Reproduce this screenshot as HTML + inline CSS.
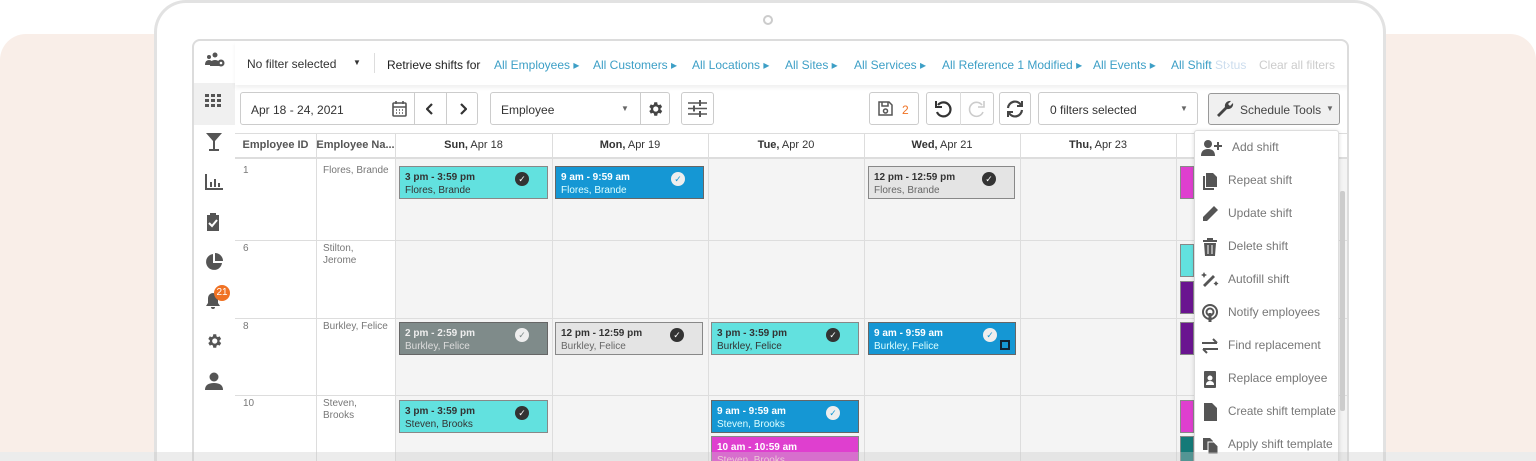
<!DOCTYPE html>
<html><head><meta charset="utf-8"><style>
*{box-sizing:border-box;margin:0;padding:0}
html,body{width:1536px;height:461px;overflow:hidden}
body{background:#fff;font-family:"Liberation Sans",Arial,sans-serif}
#wrap{position:relative;width:1536px;height:461px;overflow:hidden}
.a{position:absolute}
.bg{left:0;top:34px;width:1536px;height:418px;background:#f9eee8;border-radius:26px 26px 0 0}
.frame{left:154px;top:0;width:1232px;height:461px;background:#fff;border:3px solid #e2e2e2;border-bottom:0;border-radius:32px 32px 0 0}
.cam{left:763px;top:15px;width:10px;height:10px;border:2px solid #ccc;border-radius:50%}
.screen{left:192px;top:39px;width:1157px;height:422px;border:2px solid #dcdcdc;border-bottom:0;border-radius:8px 8px 0 0;background:#fff;overflow:hidden}
.t{font-size:12px;color:#333;white-space:nowrap}
.lnk{color:#3d9fc6;font-size:12px;white-space:nowrap}
.btn{border:1px solid #ccc;border-radius:3px;background:#fff}
.col{top:92px;height:340px;border-left:1px solid #ddd}
.hd{top:92px;height:25px;font-size:11px;color:#333;text-align:center;line-height:25px}
.sh{height:33px;border:1px solid #888;font-size:10px;padding:4px 5px;line-height:13px;overflow:hidden}
.sh b{font-size:10px;display:block}
.ck{position:absolute;right:18px;top:5px;width:14px;height:14px;border-radius:50%;font-size:9px;line-height:14px;text-align:center}
.mi{left:0;width:143px;height:33px;font-size:12px;color:#777;line-height:33px;padding-left:33px;white-space:nowrap;overflow:hidden}
.mi svg{position:absolute;left:6px;top:8px}
.sb{position:absolute;left:11px}
</style></head><body><div id="wrap">
<div class="a bg"></div>
<div class="a frame"></div>
<div class="a cam"></div>
<div class="a screen">
 <div class="a" style="left:0;top:42px;width:41px;height:42px;background:#f0f0f0"></div>
 <svg class="sb" style="top:11px" width="20" height="16" viewBox="0 0 20 16" fill="#555"><circle cx="4" cy="5" r="2"/><circle cx="10" cy="3" r="2.5"/><path d="M0 13q0-5 4-5t4 5zM5 14q0-6 5-6t5 6z"/><circle cx="16" cy="11" r="3.5"/><circle cx="16" cy="11" r="1.3" fill="#fff"/></svg>
 <svg class="sb" style="top:53px" width="16" height="14" viewBox="0 0 16 14" fill="#555"><rect x="0" y="0" width="4" height="3"/><rect x="6" y="0" width="4" height="3"/><rect x="12" y="0" width="4" height="3"/><rect x="0" y="5" width="4" height="3"/><rect x="6" y="5" width="4" height="3"/><rect x="12" y="5" width="4" height="3"/><rect x="0" y="10" width="4" height="3"/><rect x="6" y="10" width="4" height="3"/><rect x="12" y="10" width="4" height="3"/></svg>
 <svg class="sb" style="top:92px" width="18" height="18" viewBox="0 0 18 18" fill="#555"><path d="M1 0h16L10 8v8h4v2H4v-2h4V8z"/></svg>
 <svg class="sb" style="top:133px" width="18" height="16" viewBox="0 0 18 16" fill="#555"><path d="M0 0h2v14h16v2H0z"/><rect x="5" y="8" width="2" height="5"/><rect x="9" y="5" width="2" height="8"/><rect x="13" y="9" width="2" height="4"/></svg>
 <svg class="sb" style="top:172px" width="16" height="18" viewBox="0 0 16 18" fill="#555"><path d="M2 2h3V0h6v2h3v16H2z"/><path d="M4 10l3 3 5-6" stroke="#fff" stroke-width="2" fill="none"/></svg>
 <svg class="sb" style="top:212px" width="18" height="18" viewBox="0 0 18 18" fill="#555"><path d="M8 1A8 8 0 1 0 17 10H8z"/><path d="M10 0A8 8 0 0 1 18 8H10z"/></svg>
 <svg class="sb" style="top:251px" width="16" height="18" viewBox="0 0 16 18" fill="#555"><path d="M8 1a5 5 0 0 1 5 5v5l2 3H1l2-3V6a5 5 0 0 1 5-5zM6 15h4a2 2 0 0 1-4 0z"/></svg>
 <div class="a" style="left:20px;top:244px;width:16px;height:16px;border-radius:50%;background:#f07224;color:#fff;font-size:10px;text-align:center;line-height:16px">21</div>
 <svg class="sb" style="top:291px" width="18" height="18" viewBox="0 0 24 24" fill="#555"><path d="M19.4 13a7.5 7.5 0 0 0 0-2l2.1-1.6-2-3.5-2.5 1a7 7 0 0 0-1.7-1L15 3h-4l-.4 2.9a7 7 0 0 0-1.7 1l-2.5-1-2 3.5L6.5 11a7.5 7.5 0 0 0 0 2l-2.1 1.6 2 3.5 2.5-1a7 7 0 0 0 1.7 1L11 21h4l.4-2.9a7 7 0 0 0 1.7-1l2.5 1 2-3.5zM13 15.5a3.5 3.5 0 1 1 0-7 3.5 3.5 0 0 1 0 7z"/></svg>
 <svg class="sb" style="top:331px" width="18" height="18" viewBox="0 0 18 18" fill="#555"><circle cx="9" cy="5" r="4.5"/><path d="M0 18q0-7 9-7t9 7z"/></svg>
 <div class="a" style="left:41px;top:0;width:1114px;height:44px;box-shadow:0 3px 4px rgba(0,0,0,.06)"></div>
 <div class="a t" style="left:53px;top:16px">No filter selected</div>
 <div class="a t" style="left:159px;top:17px;font-size:8px">▼</div>
 <div class="a" style="left:180px;top:12px;height:20px;border-left:1px solid #ddd"></div>
 <div class="a t" style="left:193px;top:17px;color:#222">Retrieve shifts for</div>
 <div class="a lnk" style="left:300px;top:17px">All Employees ▸</div>
 <div class="a lnk" style="left:399px;top:17px">All Customers ▸</div>
 <div class="a lnk" style="left:498px;top:17px">All Locations ▸</div>
 <div class="a lnk" style="left:591px;top:17px">All Sites ▸</div>
 <div class="a lnk" style="left:660px;top:17px">All Services ▸</div>
 <div class="a lnk" style="left:748px;top:17px">All Reference 1 Modified ▸</div>
 <div class="a lnk" style="left:899px;top:17px">All Events ▸</div>
 <div class="a lnk" style="left:977px;top:17px">All Shift <span style="color:#cde">St›tus</span></div>
 <div class="a t" style="left:1065px;top:17px;color:#ccc">Clear all filters</div>
 <div class="a btn" style="left:46px;top:51px;width:238px;height:33px"></div>
 <div class="a t" style="left:57px;top:62px">Apr 18 - 24, 2021</div>
 <svg class="a" style="left:198px;top:60px" width="15" height="16" viewBox="0 0 15 16" fill="none" stroke="#555" stroke-width="1.6"><rect x="1" y="2" width="13" height="13" rx="1"/><path d="M1 6h13M4 0v3M11 0v3"/><path d="M4 9h1M7 9h1M10 9h1M4 12h1M7 12h1M10 12h1" stroke-width="1.4"/></svg>
 <div class="a" style="left:220px;top:51px;height:33px;border-left:1px solid #ccc"></div>
 <div class="a" style="left:252px;top:51px;height:33px;border-left:1px solid #ccc"></div>
 <svg class="a" style="left:232px;top:62px" width="8" height="12" viewBox="0 0 8 12" fill="none" stroke="#333" stroke-width="2.2"><path d="M6 1L1 6l5 5"/></svg>
 <svg class="a" style="left:265px;top:62px" width="8" height="12" viewBox="0 0 8 12" fill="none" stroke="#333" stroke-width="2.2"><path d="M2 1l5 5-5 5"/></svg>
 <div class="a btn" style="left:296px;top:51px;width:180px;height:33px"></div>
 <div class="a t" style="left:307px;top:62px">Employee</div>
 <div class="a t" style="left:427px;top:63px;font-size:8px;color:#666">▼</div>
 <div class="a" style="left:446px;top:51px;height:33px;border-left:1px solid #ccc"></div>
 <svg class="a" style="left:452px;top:59px" width="18" height="18" viewBox="0 0 24 24" fill="#444"><path d="M19.4 13a7.5 7.5 0 0 0 0-2l2.1-1.6-2-3.5-2.5 1a7 7 0 0 0-1.7-1L15 3h-4l-.4 2.9a7 7 0 0 0-1.7 1l-2.5-1-2 3.5L6.5 11a7.5 7.5 0 0 0 0 2l-2.1 1.6 2 3.5 2.5-1a7 7 0 0 0 1.7 1L11 21h4l.4-2.9a7 7 0 0 0 1.7-1l2.5 1 2-3.5zM13 15.5a3.5 3.5 0 1 1 0-7 3.5 3.5 0 0 1 0 7z"/></svg>
 <div class="a btn" style="left:487px;top:51px;width:33px;height:33px"></div>
 <svg class="a" style="left:494px;top:59px" width="19" height="17" viewBox="0 0 19 17" stroke="#555" stroke-width="1.6" fill="none"><path d="M0 3h19M0 8.5h19M0 14h19"/><path d="M12 0v6M6 5.5v6M12 11v6" stroke-width="2"/></svg>
 <div class="a btn" style="left:675px;top:51px;width:50px;height:33px"></div>
 <svg class="a" style="left:684px;top:60px" width="15" height="15" viewBox="0 0 15 15" fill="none" stroke="#555" stroke-width="1.5"><path d="M1 1h10l3 3v10H1z"/><path d="M4 1v4h6V1"/><circle cx="7.5" cy="10" r="2"/></svg>
 <div class="a t" style="left:708px;top:62px;color:#f07224">2</div>
 <div class="a btn" style="left:732px;top:51px;width:68px;height:33px"></div>
 <div class="a" style="left:766px;top:51px;height:33px;border-left:1px solid #ddd"></div>
 <svg class="a" style="left:740px;top:59px" width="18" height="18" viewBox="0 0 18 18" fill="none" stroke="#333" stroke-width="2.2"><path d="M4 5a7 7 0 1 1-1 7"/><path d="M2 1v6h6" stroke-width="2"/></svg>
 <svg class="a" style="left:774px;top:59px" width="18" height="18" viewBox="0 0 18 18" fill="none" stroke="#ccc" stroke-width="1.6"><path d="M14 5a7 7 0 1 0 1 7"/><path d="M16 1v6h-6"/></svg>
 <div class="a btn" style="left:805px;top:51px;width:32px;height:33px"></div>
 <svg class="a" style="left:812px;top:59px" width="18" height="18" viewBox="0 0 18 18" fill="none" stroke="#444" stroke-width="2.2"><path d="M2 8a7 7 0 0 1 13-3M16 10a7 7 0 0 1-13 3"/><path d="M16 1v5h-5M2 17v-5h5" stroke-width="2"/></svg>
 <div class="a btn" style="left:844px;top:51px;width:160px;height:33px"></div>
 <div class="a t" style="left:856px;top:62px">0 filters selected</div>
 <div class="a t" style="left:986px;top:63px;font-size:8px;color:#666">▼</div>
 <div class="a" style="left:1014px;top:52px;width:132px;height:32px;border:1px solid #999;border-radius:3px;background:#f0f0f0"></div>
 <svg class="a" style="left:1022px;top:59px" width="18" height="18" viewBox="0 0 18 18" fill="#444"><path d="M17 3l-3 3-2-2 3-3a5 5 0 0 0-6 6L1 15l2 2 8-8a5 5 0 0 0 6-6z"/></svg>
 <div class="a t" style="left:1046px;top:62px;color:#444">Schedule Tools</div>
 <div class="a t" style="left:1132px;top:63px;font-size:8px;color:#666">▼</div>
 <div class="a" style="left:41px;top:92px;width:1116px;height:340px;background:#f4f4f4"></div>
 <div class="a" style="left:41px;top:92px;width:161px;height:340px;background:#fff"></div>
 <div class="a" style="left:41px;top:92px;width:1116px;height:26px;background:#fff;border-top:1px solid #ddd;border-bottom:2px solid #ddd"></div>
 <div class="a" style="left:41px;top:199px;width:1116px;border-top:1px solid #ddd"></div>
 <div class="a" style="left:41px;top:277px;width:1116px;border-top:1px solid #ddd"></div>
 <div class="a" style="left:41px;top:354px;width:1116px;border-top:1px solid #ddd"></div>
 <div class="a col" style="left:122px"></div><div class="a col" style="left:201px"></div>
 <div class="a col" style="left:358px"></div><div class="a col" style="left:514px"></div>
 <div class="a col" style="left:670px"></div><div class="a col" style="left:826px"></div>
 <div class="a col" style="left:982px"></div>
 <div class="a hd" style="left:41px;width:81px;font-weight:bold;color:#555">Employee ID</div>
 <div class="a hd" style="left:122px;width:79px;font-weight:bold;color:#555">Employee Na...</div>
 <div class="a hd" style="left:201px;width:157px"><b>Sun,</b> Apr 18</div>
 <div class="a hd" style="left:358px;width:156px"><b>Mon,</b> Apr 19</div>
 <div class="a hd" style="left:514px;width:156px"><b>Tue,</b> Apr 20</div>
 <div class="a hd" style="left:670px;width:156px"><b>Wed,</b> Apr 21</div>
 <div class="a hd" style="left:826px;width:156px"><b>Thu,</b> Apr 23</div>
 <div class="a t" style="left:49px;top:124px;font-size:10px;color:#777">1</div>
 <div class="a t" style="left:129px;top:124px;font-size:10px;color:#777">Flores, Brande</div>
 <div class="a t" style="left:49px;top:202px;font-size:10px;color:#777">6</div>
 <div class="a t" style="left:129px;top:202px;font-size:10px;color:#777;line-height:12px">Stilton,<br>Jerome</div>
 <div class="a t" style="left:49px;top:280px;font-size:10px;color:#777">8</div>
 <div class="a t" style="left:129px;top:280px;font-size:10px;color:#777">Burkley, Felice</div>
 <div class="a t" style="left:49px;top:357px;font-size:10px;color:#777">10</div>
 <div class="a t" style="left:129px;top:357px;font-size:10px;color:#777;line-height:12px">Steven,<br>Brooks</div>
 <div class="a sh" style="left:205px;top:125px;width:149px;background:#62e1df;color:#333"><b>3 pm - 3:59 pm</b>Flores, Brande<span class="ck" style="background:#333;color:#fff">✓</span></div>
 <div class="a sh" style="left:361px;top:125px;width:149px;background:#1597d4;color:#dff;border-color:#666"><b style="color:#fff">9 am - 9:59 am</b>Flores, Brande<span class="ck" style="background:#eee;color:#1597d4">✓</span></div>
 <div class="a sh" style="left:674px;top:125px;width:147px;background:#e4e4e4;color:#333"><b>12 pm - 12:59 pm</b><span style="color:#666">Flores, Brande</span><span class="ck" style="background:#333;color:#fff">✓</span></div>
 <div class="a sh" style="left:205px;top:281px;width:149px;background:#7f8b8a;color:#ddd;border-color:#666"><b style="color:#eee">2 pm - 2:59 pm</b>Burkley, Felice<span class="ck" style="background:#eee;color:#7f8b8a">✓</span></div>
 <div class="a sh" style="left:361px;top:281px;width:148px;background:#e4e4e4;color:#333"><b>12 pm - 12:59 pm</b><span style="color:#666">Burkley, Felice</span><span class="ck" style="background:#333;color:#fff">✓</span></div>
 <div class="a sh" style="left:517px;top:281px;width:148px;background:#62e1df;color:#333"><b>3 pm - 3:59 pm</b>Burkley, Felice<span class="ck" style="background:#333;color:#fff">✓</span></div>
 <div class="a sh" style="left:674px;top:281px;width:148px;background:#1597d4;color:#dff;border-color:#666"><b style="color:#fff">9 am - 9:59 am</b>Burkley, Felice<span class="ck" style="background:#eee;color:#1597d4">✓</span><span class="a" style="right:5px;top:17px;width:10px;height:10px;border:2px solid #123;background:#1597d4"></span></div>
 <div class="a sh" style="left:205px;top:359px;width:149px;background:#62e1df;color:#333"><b>3 pm - 3:59 pm</b>Steven, Brooks<span class="ck" style="background:#333;color:#fff">✓</span></div>
 <div class="a sh" style="left:517px;top:359px;width:148px;background:#1597d4;color:#dff;border-color:#666"><b style="color:#fff">9 am - 9:59 am</b>Steven, Brooks<span class="ck" style="background:#eee;color:#1597d4">✓</span></div>
 <div class="a sh" style="left:517px;top:395px;width:148px;height:27px;background:#df3fcf;color:#fcd;border-color:#888;border-bottom:0"><b style="color:#fff">10 am - 10:59 am</b>Steven, Brooks</div>
 <div class="a" style="left:986px;top:125px;width:14px;height:33px;background:#df3fcf;border:1px solid #888"></div>
 <div class="a" style="left:986px;top:203px;width:14px;height:33px;background:#62e1df;border:1px solid #888"></div>
 <div class="a" style="left:986px;top:240px;width:14px;height:33px;background:#6a1590;border:1px solid #888"></div>
 <div class="a" style="left:986px;top:281px;width:14px;height:33px;background:#6a1590;border:1px solid #888"></div>
 <div class="a" style="left:986px;top:359px;width:14px;height:33px;background:#df3fcf;border:1px solid #888"></div>
 <div class="a" style="left:986px;top:395px;width:14px;height:27px;background:#157a78;border:1px solid #888;border-bottom:0"></div>
 <div class="a" style="left:1000px;top:89px;width:145px;height:333px;background:#fff;border:1px solid #ddd;border-bottom:0;border-radius:3px 3px 0 0;box-shadow:0 1px 4px rgba(0,0,0,.15);overflow:hidden">
  <div class="a mi" style="top:0;padding-left:37px">Add shift<svg width="22" height="18" viewBox="0 0 22 18" fill="#555"><circle cx="7" cy="5" r="4"/><path d="M0 17q0-7 7-7t7 7z"/><path d="M17 3v8M13 7h8" stroke="#555" stroke-width="2"/></svg></div>
  <div class="a mi" style="top:33px">Repeat shift<svg width="18" height="18" viewBox="0 0 18 18" fill="#555"><path d="M5 1h7l4 4v10H5z"/><path d="M2 4h2v12h9v2H2z"/></svg></div>
  <div class="a mi" style="top:66px">Update shift<svg width="18" height="18" viewBox="0 0 18 18" fill="#555"><path d="M13 1l4 4L6 16H2v-4z"/></svg></div>
  <div class="a mi" style="top:99px">Delete shift<svg width="18" height="18" viewBox="0 0 18 18" fill="#555"><path d="M2 2h14v2H2zM6 0h6v2H6zM3 5h12l-1 13H4z"/><path d="M7 7v9M11 7v9" stroke="#fff"/></svg></div>
  <div class="a mi" style="top:132px">Autofill shift<svg width="18" height="18" viewBox="0 0 18 18" fill="#555"><path d="M12 4l2 2L4 16l-2-2z"/><path d="M3 1l1 2 2 1-2 1-1 2-1-2-2-1 2-1zM15 10l1 1.5 1.5 1-1.5 1-1 1.5-1-1.5-1.5-1 1.5-1z"/></svg></div>
  <div class="a mi" style="top:165px">Notify employees<svg width="18" height="18" viewBox="0 0 18 18" fill="none" stroke="#555" stroke-width="2"><circle cx="9" cy="8" r="7"/><circle cx="9" cy="8" r="3.5"/><path d="M9 9v9" stroke-width="3"/></svg></div>
  <div class="a mi" style="top:198px">Find replacement<svg width="18" height="18" viewBox="0 0 18 18" fill="none" stroke="#555" stroke-width="2"><path d="M1 6h15M12 2l4 4M17 12H2M6 16l-4-4"/></svg></div>
  <div class="a mi" style="top:231px">Replace employee<svg width="18" height="18" viewBox="0 0 18 18" fill="#555"><rect x="3" y="1" width="12" height="17" rx="1"/><circle cx="9" cy="8" r="2.5" fill="#fff"/><path d="M5 15q0-4 4-4t4 4z" fill="#fff"/></svg></div>
  <div class="a mi" style="top:264px;font-size:11.7px">Create shift template<svg width="18" height="18" viewBox="0 0 18 18" fill="#555"><path d="M3 0h8l5 5v13H3z"/></svg></div>
  <div class="a mi" style="top:297px">Apply shift template<svg width="18" height="18" viewBox="0 0 18 18" fill="#555"><path d="M2 2h7l3 3v9H2z"/><path d="M7 6h6l4 4v8H7z" stroke="#fff" stroke-width="1"/></svg></div>
 </div>
 <div class="a" style="left:1146px;top:150px;width:5px;height:220px;background:#ccc;border-radius:2px"></div>
</div>
<div class="a" style="left:0;top:452px;width:1536px;height:9px;background:rgba(200,200,200,.35)"></div>
</div></body></html>
